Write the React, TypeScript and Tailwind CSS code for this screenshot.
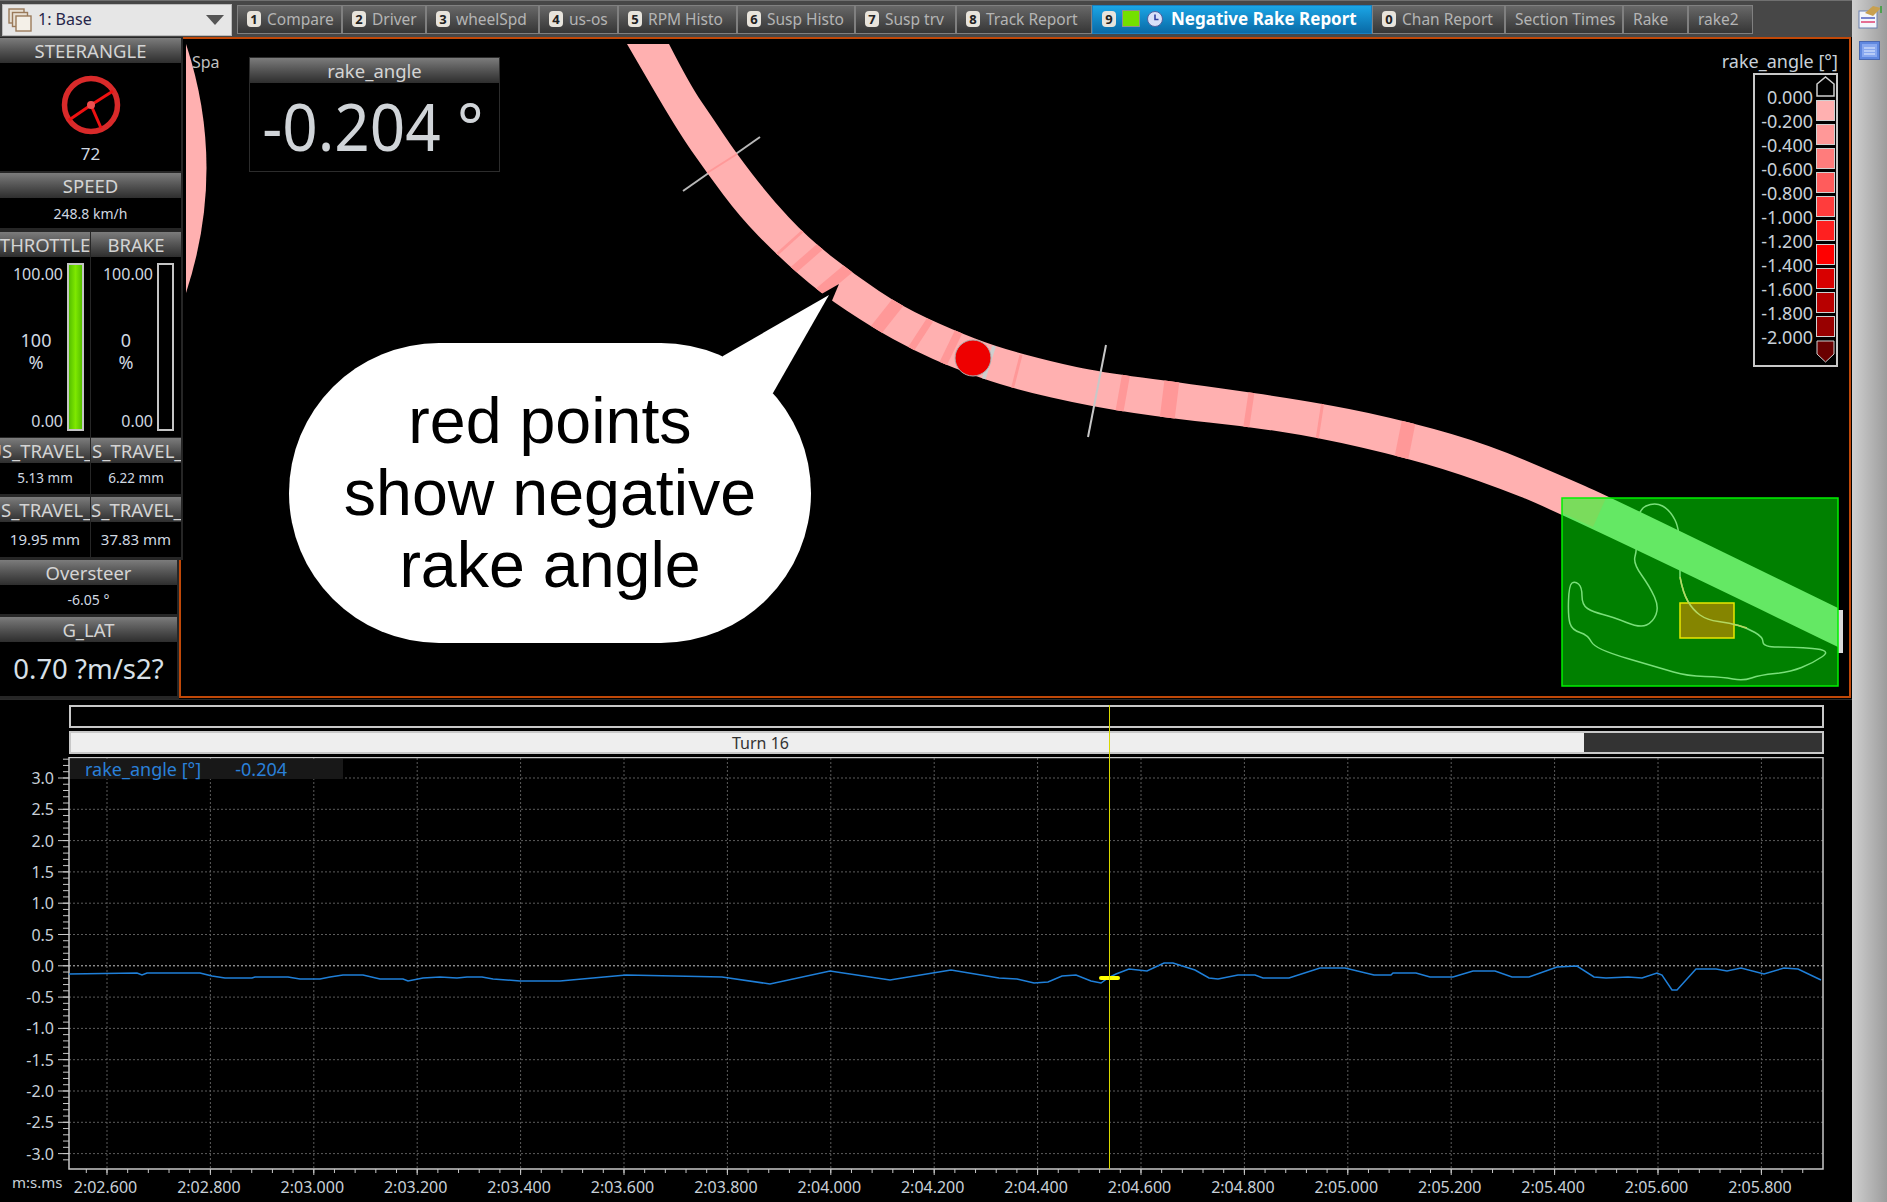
const TABS = [
  { n: "1", label: "Compare", w: 105 },
  { n: "2", label: "Driver", w: 84 },
  { n: "3", label: "wheelSpd", w: 113 },
  { n: "4", label: "us-os", w: 79 },
  { n: "5", label: "RPM Histo", w: 119 },
  { n: "6", label: "Susp Histo", w: 118 },
  { n: "7", label: "Susp trv", w: 101 },
  { n: "8", label: "Track Report", w: 136 },
  { n: "9", label: "Negative Rake Report", w: 280, active: true },
  { n: "0", label: "Chan Report", w: 133 },
  { label: "Section Times", w: 118 },
  { label: "Rake", w: 65 },
  { label: "rake2", w: 65 },
];

const LEGEND_LABELS = ["0.000", "-0.200", "-0.400", "-0.600", "-0.800", "-1.000", "-1.200", "-1.400", "-1.600", "-1.800", "-2.000"];
const LEGEND_COLORS = ["#ffb0b0", "#ff9898", "#ff7c7c", "#ff5c5c", "#ff3c3c", "#ff2020", "#ff0000", "#d80000", "#b80000", "#980000"];

type Pt = [number, number];

const RIBBON_UPPER: Pt[] = [[669, 44], [690, 85], [712, 117], [736, 153], [770, 197], [807, 237], [855, 275], [903, 307], [953, 330], [997, 347], [1053, 362], [1100, 372], [1184, 383], [1323, 403], [1414, 423], [1489, 445], [1560, 475], [1610, 497], [1838, 608]];
const RIBBON_LOWER: Pt[] = [[1838, 647], [1562, 513], [1478, 480], [1407, 458], [1316, 437], [1243, 426], [1175, 419], [1093, 407], [1010, 388], [953, 368], [913, 350], [873, 328], [820, 293], [777, 255], [740, 217], [707, 173], [677, 130], [627, 44]];

// turn a list of points into a path that rounds off at each inner point
function smooth(pts: Pt[]): string {
  let d = `${pts[0][0]} ${pts[0][1]}`;
  for (let i = 1; i < pts.length - 1; i++) {
    const mx = (pts[i][0] + pts[i + 1][0]) / 2;
    const my = (pts[i][1] + pts[i + 1][1]) / 2;
    d += ` Q${pts[i][0]} ${pts[i][1]} ${mx} ${my}`;
  }
  const last = pts[pts.length - 1];
  return `${d} L${last[0]} ${last[1]}`;
}

const RIBBON = `M${smooth(RIBBON_UPPER)} L${smooth(RIBBON_LOWER)}Z`;

// [x1, y1, x2, y2, width] of the darker stripes across the track
const BANDS = [
  [775, 256, 804, 230, 3],
  [791, 272, 822, 245, 8],
  [818, 294, 849, 268, 11],
  [876, 330, 899, 301, 13],
  [911, 349, 930, 320, 7],
  [943, 364, 959, 331, 8],
  [1012, 390, 1021, 355, 3],
  [1119, 414, 1126, 375, 8],
  [1167, 420, 1172, 380, 15],
  [1246, 429, 1252, 389, 6],
  [1317, 440, 1323, 401, 3],
  [1401, 460, 1409, 420, 14],
];

const MINI_TRACK: Pt[] = [[1680, 577], [1683, 593], [1693, 610], [1707, 620], [1730, 623], [1747, 628], [1763, 637], [1763, 647], [1793, 647], [1832, 650], [1813, 663], [1790, 672], [1760, 675], [1743, 681], [1723, 677], [1687, 676], [1660, 668], [1595, 649], [1588, 635], [1572, 630], [1568, 617], [1569, 585], [1575, 581], [1582, 587], [1582, 605], [1593, 612], [1613, 617], [1640, 628], [1653, 622], [1659, 607], [1650, 587], [1633, 563], [1637, 550], [1637, 510], [1655, 502], [1670, 510], [1680, 530], [1680, 577]];

const CURVE =
  "69,974 137,973 142,975 147,973 200,973 212,976 225,978 252,978 255,977 288,977 300,979 320,979 330,977 343,975 363,975 380,979 403,979 408,981 423,978 440,977 457,978 467,977 482,977 493,979 520,981 560,981 626,975 722,977 770,984 830,971 890,980 951,970 999,978 1017,979 1034,983 1048,982 1062,976 1076,975 1091,981 1101,983 1108,978 1116,974 1129,969 1147,971 1164,963 1173,963 1195,970 1209,978 1218,979 1238,975 1255,975 1263,978 1289,978 1320,968 1345,968 1374,975 1391,975 1393,973 1416,973 1430,977 1453,977 1473,971 1495,971 1512,977 1529,977 1557,967 1577,966 1594,977 1606,978 1628,977 1642,978 1657,973 1662,975 1672,990 1677,990 1696,969 1716,969 1727,971 1741,968 1764,974 1784,968 1798,969 1821,980";

const X_LABELS = ["2:02.600", "2:02.800", "2:03.000", "2:03.200", "2:03.400", "2:03.600", "2:03.800", "2:04.000", "2:04.200", "2:04.400", "2:04.600", "2:04.800", "2:05.000", "2:05.200", "2:05.400", "2:05.600", "2:05.800"];
const Y_LABELS = ["3.0", "2.5", "2.0", "1.5", "1.0", "0.5", "0.0", "-0.5", "-1.0", "-1.5", "-2.0", "-2.5", "-3.0"];

function Header({ children, className = "" }: { children: React.ReactNode; className?: string }) {
  return (
    <div className={`h-[25px] shrink-0 flex justify-center items-center overflow-hidden whitespace-nowrap bg-gradient-to-b from-[#7c7c7c] to-[#2e2e2e] text-[18.5px] text-[#d4d4d4] ${className}`}>
      {children}
    </div>
  );
}

function ValueCell({ title, value, h, size }: { title: string; value: string; h: string; size: string }) {
  return (
    <div className="flex-1 flex flex-col min-w-0">
      <Header>{title}</Header>
      <div className={`${h} ${size} bg-black flex items-center justify-center text-[#d0d8e0]`}>{value}</div>
    </div>
  );
}

function Gauge({ mid, fill, pad, midPad }: { mid: string; fill?: boolean; pad: string; midPad: string }) {
  return (
    <div className="h-[180px] shrink-0 bg-black flex pt-[6px] pb-[6px] text-[#d0d8e0] text-[16px] leading-[22px]">
      <div className={`${pad} flex flex-col justify-between text-right`}>
        <span>100.00</span>
        <span className={`${midPad} mt-[6px] w-[54px] self-start text-center text-[18px] leading-[22px]`}>
          {mid}
          <br />%
        </span>
        <span className="-mb-[1px]">0.00</span>
      </div>
      <div className={`w-[17px] ml-[4px] border-2 border-[#c4c4c4] ${fill ? "bg-gradient-to-r from-[#55c000] via-[#7ee800] to-[#55c000]" : "bg-black"}`} />
    </div>
  );
}

function SteerWheel() {
  return (
    <svg width="64" height="64" viewBox="0 0 64 64">
      <circle cx="32" cy="32" r="26.5" fill="none" stroke="#d92a2a" strokeWidth="5.5" />
      <g stroke="#ee1111" strokeWidth="3">
        <line x1="32" y1="32" x2="54" y2="18" />
        <line x1="32" y1="32" x2="10" y2="47" />
        <line x1="32" y1="32" x2="42" y2="55" />
      </g>
      <circle cx="32" cy="32" r="4" fill="#ee5050" />
    </svg>
  );
}

function TopBar() {
  return (
    <div className="h-[37px] shrink-0 bg-[#474747] border-t border-[#707070] flex items-start pt-[3px]">
      <div className="ml-[2px] w-[230px] h-[32px] bg-[#e6e6e6] border border-[#bbb] flex items-center pl-[5px] pr-[7px]">
        <svg width="24" height="24" viewBox="0 0 24 24" className="shrink-0">
          <rect x="1" y="1" width="15" height="14" fill="#e8e0d4" stroke="#9a7a5a" strokeWidth="1.4" />
          <rect x="4.5" y="4.5" width="15" height="14" fill="#e8e0d4" stroke="#9a7a5a" strokeWidth="1.4" />
          <rect x="8" y="8" width="15" height="15" fill="#f4f0e8" stroke="#9a7a5a" strokeWidth="1.4" />
        </svg>
        <span className="ml-[6px] text-[16px] leading-[22px] -mt-[2px] text-[#26264a]">1: Base</span>
        <svg width="18" height="10" viewBox="0 0 18 10" className="ml-auto">
          <polygon points="0,0 18,0 9,10" fill="#555" />
        </svg>
      </div>
      <div className="ml-[5px] flex h-[29px] mt-[1px]">
        {TABS.map((t) => (
          <div
            key={t.label}
            style={{ width: t.w }}
            className={`h-full flex items-center pl-[9px] border whitespace-nowrap leading-[24px] pb-[2px] ${
              t.active
                ? "border-[#1a80c0] bg-gradient-to-b from-[#1ba6e6] to-[#0a6aa6] font-bold text-white text-[17px]"
                : "border-[#808080] bg-gradient-to-b from-[#686868] to-[#363636] text-[#b4b4b4] text-[15.5px]"
            }`}
          >
            {t.n && (
              <span className="w-[14px] h-[16px] mr-[6px] rounded-[4px] bg-[#e8e4dc] text-[#222] text-[13px] font-bold leading-[16px] text-center shrink-0">
                {t.n}
              </span>
            )}
            {t.active && (
              <>
                <span className="w-[18px] h-[17px] mr-[7px] bg-[#74e000] border border-[#909090] shrink-0" />
                <svg width="16" height="16" viewBox="0 0 16 16" className="mr-[8px] shrink-0">
                  <circle cx="8" cy="8" r="7.5" fill="#d8e0f8" stroke="#5060a0" />
                  <path d="M8 3.5V8.5H11.5" fill="none" stroke="#3040a0" strokeWidth="1.6" />
                </svg>
              </>
            )}
            {t.label}
          </div>
        ))}
      </div>
    </div>
  );
}

function LeftColumn() {
  return (
    <div className="w-[179px] shrink-0 relative z-10 flex flex-col bg-[#262626]">
      <div className="w-[183px] pt-[1px] pr-[2px] flex flex-col bg-[#262626]">
        <Header>STEERANGLE</Header>
        <div className="h-[108px] shrink-0 bg-black flex flex-col items-center pt-[10px] text-[17px] text-[#d0d8e0]">
          <SteerWheel />
          <span className="mt-[6px] leading-[22px]">72</span>
        </div>
        <div className="h-[2px]" />
        <Header>SPEED</Header>
        <div className="h-[30px] shrink-0 bg-black flex items-center justify-center text-[14px] text-[#d0d8e0]">248.8 km/h</div>
        <div className="h-[4px]" />
        <div className="flex gap-[1px]">
          <div className="flex-1 flex flex-col min-w-0">
            <Header>THROTTLE</Header>
            <Gauge mid="100" fill pad="w-[63px]" midPad="ml-[9px]" />
          </div>
          <div className="flex-1 flex flex-col min-w-0">
            <Header>BRAKE</Header>
            <Gauge mid="0" pad="w-[62px]" midPad="ml-[8px]" />
          </div>
        </div>
        <div className="h-[1px]" />
        <div className="flex gap-[1px]">
          <ValueCell title="SUS_TRAVEL_FL" value="5.13 mm" h="h-[31px]" size="text-[13.5px]" />
          <ValueCell title="SUS_TRAVEL_FR" value="6.22 mm" h="h-[31px]" size="text-[13.5px]" />
        </div>
        <div className="h-[3px]" />
        <div className="flex gap-[1px]">
          <ValueCell title="SUS_TRAVEL_RL" value="19.95 mm" h="h-[35px]" size="text-[15px]" />
          <ValueCell title="SUS_TRAVEL_RR" value="37.83 mm" h="h-[35px]" size="text-[15px]" />
        </div>
        <div className="h-[3px]" />
      </div>
      <div className="w-[177px] flex flex-col">
        <Header>Oversteer</Header>
        <div className="h-[29px] shrink-0 bg-black flex items-center justify-center text-[14px] text-[#d0d8e0]">-6.05 °</div>
        <div className="h-[3px]" />
        <Header>G_LAT</Header>
        <div className="h-[54px] shrink-0 bg-black flex items-center justify-center text-[27.5px] text-[#d8e0e8]">0.70 ?m/s2?</div>
      </div>
    </div>
  );
}

function TrackDrawing() {
  return (
    <svg width="1668" height="657" className="absolute left-0 top-0">
      <defs>
        <clipPath id="ribbon-clip">
          <path d={RIBBON} />
        </clipPath>
        <clipPath id="inset-clip">
          <rect x="1562" y="498" width="276" height="188" />
        </clipPath>
      </defs>
      <g transform="translate(-181 -39)">
        <path d="M186 44Q227 168 186 293Z" fill="#ffb0b0" />
        <line x1="683" y1="191" x2="760" y2="137" stroke="#b8b8b8" strokeWidth="2" />
        <path d={RIBBON} fill="#ffb0b0" />
        <g clipPath="url(#ribbon-clip)">
          {BANDS.map(([x1, y1, x2, y2, w]) => (
            <line key={x1} x1={x1} y1={y1} x2={x2} y2={y2} stroke="#ff9898" strokeWidth={w} />
          ))}
          <line x1="707" y1="173" x2="737" y2="154" stroke="#ff9898" strokeWidth="2" />
          <line x1="983" y1="381" x2="994" y2="346" stroke="#cfcfcf" strokeWidth="4" />
        </g>
        <line x1="1088" y1="437" x2="1106" y2="345" stroke="#c8c8c8" strokeWidth="2" />
        <circle cx="973" cy="358" r="18" fill="#ee0000" stroke="#b0b0b0" strokeWidth="1" />

        <rect x="1838" y="610" width="5" height="43" fill="#dcdcdc" />
        <rect x="1562" y="498" width="276" height="188" fill="#008000" />
        <path d={`M${smooth(MINI_TRACK)}`} fill="none" stroke="#7adf7a" strokeWidth="1.5" />
        <rect x="1680" y="603" width="54" height="35" fill="#858500" stroke="#e8e800" strokeWidth="1.5" />
        <path d={`M${smooth(MINI_TRACK.slice(0, 6))}`} fill="none" stroke="#b4d860" strokeWidth="1.5" />
        <path d={RIBBON} fill="#64e864" clipPath="url(#inset-clip)" />
        <polygon points="1562,498 1606,498 1593,527 1562,513" fill="#7adc5c" />
        <rect x="1562" y="498" width="276" height="188" fill="none" stroke="#00f000" strokeWidth="1.5" />

        <polygon points="839,284 818,296 831,303" fill="#000" />
        <rect x="289" y="343" width="522" height="300" rx="150" ry="150" fill="#fff" />
        <polygon points="723,356 829,295 773,393 700,420" fill="#fff" />
      </g>
    </svg>
  );
}

function RakeLegend() {
  return (
    <div className="absolute right-[11px] top-[10px] flex flex-col items-end text-[#c8d0d8]">
      <div className="h-[24px] text-[18px] leading-[24px]">rake_angle [°]</div>
      <div className="w-[85px] h-[294px] border-2 border-[#c8c8c8] bg-black flex pt-[1px]">
        <div className="w-[58px] pt-[9px] text-[18px] leading-[24px] text-right">
          {LEGEND_LABELS.map((l) => (
            <div key={l} className="h-[24px]">{l}</div>
          ))}
        </div>
        <div className="ml-[3px] w-[19px] flex flex-col gap-[3px]">
          <svg width="19" height="21" viewBox="0 0 19 21">
            <polygon points="1,8 9.5,1 18,8 18,20 1,20" fill="#000" stroke="#d0d0d0" strokeWidth="1.5" />
          </svg>
          {LEGEND_COLORS.map((c) => (
            <div key={c} style={{ backgroundColor: c }} className="w-[19px] h-[21px] border border-[#d0d0d0]" />
          ))}
          <svg width="19" height="23" viewBox="0 0 19 23">
            <polygon points="1,1 18,1 18,14 9.5,22 1,14" fill="#6a0000" stroke="#d0d0d0" strokeWidth="1" />
          </svg>
        </div>
      </div>
    </div>
  );
}

function TrackMap() {
  return (
    <div className="w-[1672px] h-[661px] relative border-2 border-[#c04808] bg-black overflow-hidden">
      <TrackDrawing />
      <span className="absolute left-[11px] top-[12px] text-[16px] leading-[22px] text-[#c0c0c0]">Spa</span>
      <div className="absolute left-[68px] top-[18px] w-[251px] h-[115px] border border-[#2c2c2c] flex flex-col">
        <Header>rake_angle</Header>
        <div className="flex-1 flex items-center pl-[13px] pb-[4px] text-[66px] leading-none text-[#d0d4d8] whitespace-nowrap origin-left scale-x-[0.94]">-0.204 °</div>
      </div>
      <RakeLegend />
      <div className="absolute left-[108px] top-[346px] w-[522px] text-center font-['Liberation_Sans',sans-serif] text-[64.5px] leading-[72px] text-black">
        red points
        <br />
        show negative
        <br />
        rake angle
      </div>
    </div>
  );
}

function RakeChart() {
  const yMajor = Y_LABELS.map((_, i) => 778 + i * 31.3);
  const yMinor = Array.from({ length: 65 }, (_, i) => 759.2 + i * 6.26);
  const xMajor = X_LABELS.map((_, i) => 107 + i * 103.4);
  const xMinor = Array.from({ length: 85 }, (_, i) => 86.3 + i * 20.68).filter((x) => x < 1823);
  return (
    <svg width="1852" height="445" className="block" fill="#c8d0d8" fontSize="16">
      <g transform="translate(0 -757)">
        {yMajor.map((y, i) => (
          <line key={y} x1="69" x2="1823" y1={y} y2={y} stroke={i === 6 ? "#c4c4c4" : "#5c5c5c"} strokeDasharray="2 2" />
        ))}
        {xMajor.map((x) => (
          <line key={x} x1={x} x2={x} y1="758" y2="1169" stroke="#5c5c5c" strokeDasharray="2 2" />
        ))}
        <rect x="69" y="757.5" width="1754" height="411.5" fill="none" stroke="#c8c8c8" strokeWidth="1.5" />
        {yMinor.map((y) => (
          <line key={y} x1="63" x2="69" y1={y} y2={y} stroke="#c8c8c8" />
        ))}
        {yMajor.map((y) => (
          <line key={y} x1="58" x2="69" y1={y} y2={y} stroke="#c8c8c8" />
        ))}
        {xMinor.map((x) => (
          <line key={x} x1={x} x2={x} y1="1169" y2="1173" stroke="#c8c8c8" />
        ))}
        {xMajor.map((x) => (
          <line key={x} x1={x} x2={x} y1="1169" y2="1175" stroke="#c8c8c8" />
        ))}
        <polyline points={CURVE} fill="none" stroke="#1f7fd8" strokeWidth="1.5" />
        <line x1="1101" x2="1118" y1="978" y2="978" stroke="#ffff00" strokeWidth="4" strokeLinecap="round" />
        {Y_LABELS.map((l, i) => (
          <text key={l} x="54" y={yMajor[i] + 6} textAnchor="end">{l}</text>
        ))}
        {X_LABELS.map((l, i) => (
          <text key={l} x={xMajor[i] - 1.5} y="1193" textAnchor="middle">{l}</text>
        ))}
        <text x="12" y="1188" fontSize="15">m:s.ms</text>
      </g>
    </svg>
  );
}

function ChartSection() {
  return (
    <div className="flex-1 relative bg-black border-t border-[#2a2a2a]">
      <div className="pt-[5px] pl-[69px] w-[1824px] flex flex-col">
        <div className="h-[23px] border-2 border-[#c8c8c8] bg-black" />
        <div className="mt-[3px] h-[23px] border-2 border-[#c8c8c8] flex text-[16px] text-[#333]">
          <div className="w-[1513px] bg-[#eeeeee] pl-[661px] leading-[21px]">Turn 16</div>
          <div className="flex-1 bg-[#333333]" />
        </div>
      </div>
      <div className="h-[3px]" />
      <RakeChart />
      <div className="absolute left-[70px] top-[59px] w-[273px] h-[20px] bg-[#181818] flex items-center text-[18px] text-[#2a80d8]">
        <span className="ml-[15px]">rake_angle [°]</span>
        <span className="ml-[34px]">-0.204</span>
      </div>
      <div className="absolute left-[1109px] top-[5px] h-[464px] w-px bg-[#d8d800]" />
    </div>
  );
}

function SideBar() {
  return (
    <div className="w-[35px] shrink-0 flex flex-col items-center pt-[5px] gap-[12px] bg-gradient-to-r from-[#d0d0d0] to-[#9c9c9c]">
      <svg width="26" height="24" viewBox="0 0 26 24">
        <rect x="2" y="6" width="18" height="17" fill="#f4f6fc" stroke="#6a80b0" />
        <line x1="4" y1="13" x2="18" y2="13" stroke="#5060c0" strokeWidth="1.5" />
        <line x1="4" y1="17" x2="18" y2="17" stroke="#e04070" strokeWidth="1.5" />
        <path d="M8 8L16 1L24 3L16 11Z" fill="#c8a050" />
        <path d="M24 1V8" stroke="#50a050" strokeWidth="2" />
      </svg>
      <svg width="21" height="19" viewBox="0 0 21 19">
        <rect x="0.5" y="0.5" width="20" height="18" fill="#6088e0" stroke="#4a68b0" />
        <rect x="3" y="3" width="15" height="13" fill="#88a8f0" />
        <line x1="5" y1="7" x2="16" y2="7" stroke="#e8f0ff" />
        <line x1="5" y1="10" x2="16" y2="10" stroke="#e8f0ff" />
        <line x1="5" y1="13" x2="16" y2="13" stroke="#e8f0ff" />
      </svg>
    </div>
  );
}

export default function App() {
  return (
    <div className="w-[1887px] h-[1202px] flex overflow-hidden bg-black font-['Noto_Sans',sans-serif]">
      <div className="w-[1852px] flex flex-col">
        <TopBar />
        <div className="flex h-[662px] shrink-0 bg-black">
          <LeftColumn />
          <TrackMap />
        </div>
        <ChartSection />
      </div>
      <SideBar />
    </div>
  );
}
